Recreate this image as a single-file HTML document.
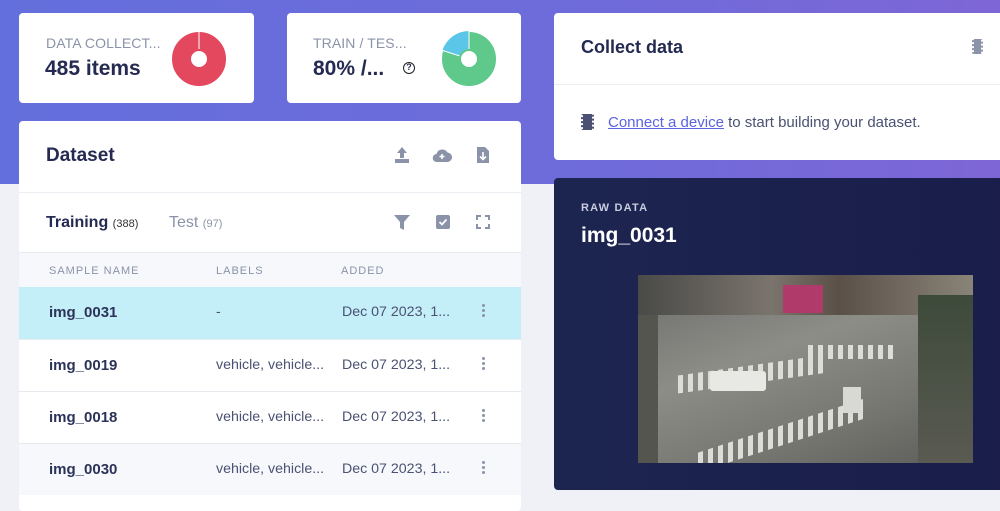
<!DOCTYPE html>
<html><head><style>
*{box-sizing:border-box;margin:0;padding:0}
body{width:1000px;height:498px;overflow:hidden;font-family:"Liberation Sans",sans-serif;background:#f0f1f7;position:relative;color:#242a52}
.bg{position:absolute;left:0;top:0;width:1000px;height:184px;background:linear-gradient(90deg,#636fdc,#6f6bda 60%,#7e66d6)}
.card{position:absolute;background:#fff;border-radius:4px}
.lbl{font-size:14px;color:#8a93a8;letter-spacing:.1px}
.big{font-size:21px;font-weight:bold;color:#242a52}
.ico{position:absolute;fill:#8a93a8}
.row{position:absolute;left:0;width:502px;height:52px;border-top:1px solid #e8eaf0;font-size:14.2px}
.row span{position:absolute;top:17px}
.n{left:30px;font-weight:bold;color:#2c3358;font-size:15px}
.l{left:197px;color:#4a5172}
.d{left:323px;color:#4a5172}
.dots{left:463px;top:17px;width:4px}
.dots i{display:block;width:3px;height:3px;border-radius:2px;background:#8a93a8;margin-bottom:2px}
</style></head><body>
<div class="bg"></div>

<div class="card" style="left:19px;top:13px;width:235px;height:90px">
 <div class="lbl" style="position:absolute;left:27px;top:22px">DATA COLLECT...</div>
 <div class="big" style="position:absolute;left:26px;top:44px">485 items</div>
 <svg style="position:absolute;left:152px;top:18px" width="56" height="56" viewBox="0 0 56 56"><circle cx="28" cy="28" r="17.5" fill="none" stroke="#e3485f" stroke-width="19"/><line x1="28" y1="0" x2="28" y2="18" stroke="#fff" stroke-width="1"/></svg>
</div>

<div class="card" style="left:287px;top:13px;width:234px;height:90px">
 <div class="lbl" style="position:absolute;left:26px;top:22px">TRAIN / TES...</div>
 <div class="big" style="position:absolute;left:26px;top:44px">80% /...</div>
 <div style="position:absolute;left:116px;top:49px;width:12px;height:12px;border:1.5px solid #222;border-radius:50%;font-size:9px;font-weight:bold;text-align:center;line-height:9px">?</div>
 <svg style="position:absolute;left:154px;top:18px" width="56" height="56" viewBox="0 0 56 56"><circle cx="28" cy="28" r="17.5" fill="none" stroke="#5ec98a" stroke-width="19"/><path d="M28 0 A28 28 0 0 0 1.4 19.4 L18.5 24.9 A10 10 0 0 1 28 18Z" fill="#5bc6e8"/><path d="M28 0 L28 18 M1.4 19.4 L18.5 24.9" stroke="#fff" stroke-width="1"/></svg>
</div>

<div class="card" style="left:19px;top:121px;width:502px;height:390px;overflow:hidden">
 <div style="position:absolute;left:27px;top:24px;font-size:19px;font-weight:bold">Dataset</div>
 <svg class="ico" style="left:374px;top:25px" width="18" height="18" viewBox="0 0 18 18"><path d="M9 1 L4 7 H7 V12 H11 V7 H14Z M2 13 H16 V17 H2Z"/></svg>
 <svg class="ico" style="left:413px;top:26px" width="20" height="16" viewBox="0 0 20 16"><path d="M5 15 A4 4 0 0 1 4.5 7 A6 6 0 0 1 15.5 5.5 A4.5 4.5 0 0 1 15 15Z"/><path d="M10 7 V12 M7.5 9.5 H12.5" stroke="#fff" stroke-width="1.6"/></svg>
 <svg class="ico" style="left:457px;top:25px" width="14" height="18" viewBox="0 0 14 18"><path d="M1 1 H9 L13 5 V17 H1Z"/><path d="M7 6 V13 M4 10.5 L7 13.5 L10 10.5" stroke="#fff" stroke-width="1.6" fill="none"/></svg>
 <div style="position:absolute;left:0;top:71px;width:502px;border-top:1px solid #eceef3"></div>
 <div style="position:absolute;left:27px;top:93px;font-size:16px;font-weight:bold">Training <span style="font-size:11px;font-weight:normal;color:#333">(388)</span></div>
 <div style="position:absolute;left:150px;top:93px;font-size:16px;color:#8a93a8">Test <span style="font-size:11px">(97)</span></div>
 <svg class="ico" style="left:375px;top:94px" width="16" height="15" viewBox="0 0 16 15"><path d="M0 0 H16 L10 7 V15 L6 13 V7Z"/></svg>
 <svg class="ico" style="left:417px;top:94px" width="14" height="14" viewBox="0 0 14 14"><rect width="14" height="14" rx="2"/><path d="M3.5 7 L6 9.5 L10.5 4.5" stroke="#fff" stroke-width="1.8" fill="none"/></svg>
 <svg style="position:absolute;left:457px;top:94px" width="14" height="14" viewBox="0 0 14 14" fill="none" stroke="#8a93a8" stroke-width="2"><path d="M1 5V1H5M9 1H13V5M13 9V13H9M5 13H1V9"/></svg>
 <div style="position:absolute;left:0;top:131px;width:502px;height:35px;background:#f7f8fc;border-top:1px solid #e8eaf0;font-size:11px;color:#8a93a8;letter-spacing:1px">
  <span style="position:absolute;left:30px;top:12px">SAMPLE NAME</span><span style="position:absolute;left:197px;top:12px">LABELS</span><span style="position:absolute;left:322px;top:12px">ADDED</span></div>
 <div class="row" style="top:166px;background:#c4eef8;border-top:none"><span class="n">img_0031</span><span class="l">-</span><span class="d">Dec 07 2023, 1...</span><span class="dots"><i></i><i></i><i></i></span></div>
 <div class="row" style="top:218px;background:#fff"><span class="n">img_0019</span><span class="l">vehicle, vehicle...</span><span class="d">Dec 07 2023, 1...</span><span class="dots"><i></i><i></i><i></i></span></div>
 <div class="row" style="top:270px;background:#fff"><span class="n">img_0018</span><span class="l">vehicle, vehicle...</span><span class="d">Dec 07 2023, 1...</span><span class="dots"><i></i><i></i><i></i></span></div>
 <div class="row" style="top:322px;background:#f7f8fc"><span class="n">img_0030</span><span class="l">vehicle, vehicle...</span><span class="d">Dec 07 2023, 1...</span><span class="dots"><i></i><i></i><i></i></span></div>
</div>

<div class="card" style="left:554px;top:13px;width:460px;height:147px">
 <div style="position:absolute;left:27px;top:24px;font-size:18px;font-weight:bold">Collect data</div>
 <div style="position:absolute;left:418px;top:26px;width:11px;height:15px;background:#8a93a8;border-radius:2px;border-left:2px dotted #fff;border-right:2px dotted #fff"></div>
 <div style="position:absolute;left:0;top:71px;width:460px;border-top:1px solid #eceef3"></div>
 <div style="position:absolute;left:27px;top:101px;width:13px;height:16px;background:#4a5172;border-radius:2px;border-left:2px dotted #fff;border-right:2px dotted #fff"></div>
 <div style="position:absolute;left:54px;top:101px;font-size:15px;color:#4a5172"><span style="color:#5b63e0;text-decoration:underline">Connect a device</span> to start building your dataset.</div>
</div>

<div class="card" style="left:554px;top:178px;width:460px;height:312px;background:linear-gradient(90deg,#1c2550,#1a1d4a)">
 <div style="position:absolute;left:27px;top:24px;font-size:11px;color:#c9cde0;letter-spacing:1.2px;font-weight:bold">RAW DATA</div>
 <div style="position:absolute;left:27px;top:46px;font-size:21px;font-weight:bold;color:#fff">img_0031</div>
 <div style="position:absolute;left:84px;top:97px;width:335px;height:188px;overflow:hidden;background:linear-gradient(160deg,#6a6a68,#8d8d88 40%,#777872 70%,#5c5d59)">
  <div style="position:absolute;left:0;top:0;width:335px;height:40px;background:linear-gradient(90deg,#4a4a48,#7a746c 40%,#5a5048 60%,#8a8478)"></div>
  <div style="position:absolute;left:145px;top:10px;width:40px;height:28px;background:#b03a6a"></div>
  <div style="position:absolute;left:0;top:40px;width:20px;height:148px;background:#55554f"></div>
  <div style="position:absolute;left:280px;top:20px;width:55px;height:168px;background:linear-gradient(#3d4a3a,#5a5a52)"></div>
  <div style="position:absolute;left:40px;top:90px;width:150px;height:18px;background:repeating-linear-gradient(90deg,#dcdcd8 0 5px,transparent 5px 10px);transform:skewY(-8deg)"></div>
  <div style="position:absolute;left:60px;top:150px;width:170px;height:20px;background:repeating-linear-gradient(90deg,#dcdcd8 0 5px,transparent 5px 10px);transform:skewY(-18deg)"></div>
  <div style="position:absolute;left:170px;top:70px;width:90px;height:14px;background:repeating-linear-gradient(90deg,#dcdcd8 0 5px,transparent 5px 10px)"></div>
  <div style="position:absolute;left:72px;top:96px;width:56px;height:20px;background:#e8e8e4;border-radius:3px"></div>
  <div style="position:absolute;left:205px;top:112px;width:18px;height:26px;background:#d8d8d4"></div>
 </div>
</div>
</body></html>
